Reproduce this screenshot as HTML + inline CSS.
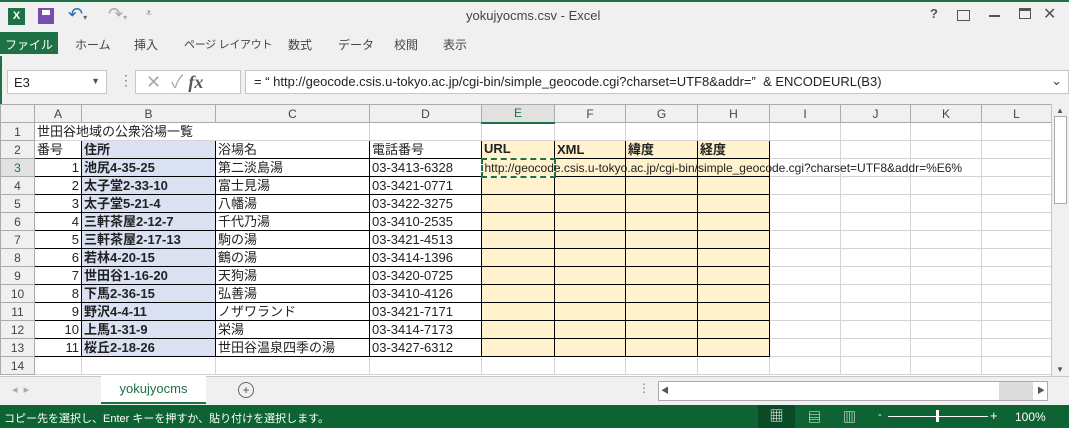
<!DOCTYPE html><html><head><meta charset="utf-8"><style>
*{margin:0;padding:0;box-sizing:border-box}
body{width:1069px;height:428px;overflow:hidden;background:#fff;font-family:"Liberation Sans","Noto Sans CJK JP",sans-serif;position:relative;font-size:12px;color:#222}
.a{position:absolute}
#title{left:0;top:0;width:1069px;height:32px;background:#f0f0f0;border-top:2px solid #1e7145}
#rib{left:0;top:32px;width:1069px;height:24px;background:#f0f0f0}
.tab{position:absolute;top:4px;font-size:12px;color:#444;white-space:nowrap}
#fbar{left:0;top:56px;width:1069px;height:48px;background:#f0f0f0;border-left:2px solid #1e7145}
table{position:absolute;left:0;top:104px;border-collapse:collapse;table-layout:fixed}
td{height:18px;border:1px solid #d4d4d4;padding:0 2px;font-size:13px;white-space:nowrap;overflow:visible;line-height:16px}
tr.h td{background:#f0f0f0;text-align:center;color:#444;font-size:12px;border-color:#ababab}
td.r{background:#f0f0f0;text-align:center;color:#444;font-size:12px;border-color:#ababab}
td.k{border:1px solid #000}
td.b{background:#dae1f3;font-weight:bold}
td.y{background:#fff2cc;font-weight:bold}
td.yy{background:#fff2cc;border:1px solid #000}
.n{text-align:right}
#sheet{left:0;top:376px;width:1069px;height:30px;background:#f0f0f0;border-top:1px solid #c6c6c6}
#status{left:0;top:405px;width:1069px;height:23px;background:#0e6333;color:#fff;font-size:11px}
</style></head><body>
<div id="title" class="a">
<div class="a" style="left:8px;top:6px;width:17px;height:17px;background:#1e7145;color:#fff;font-size:11px;font-weight:bold;text-align:center;line-height:17px">X</div>
<div class="a" style="left:38px;top:6px;width:16px;height:16px;background:#7a4bb0;border:2px solid #7a4bb0"><div style="background:#fff;width:8px;height:5px;margin:0 auto"></div></div>
<div class="a" style="left:68px;top:2px;color:#2e6fb4;font-size:18px">↶<span style="font-size:8px;color:#666">▾</span></div>
<div class="a" style="left:108px;top:2px;color:#aaa;font-size:18px">↷<span style="font-size:8px">▾</span></div>
<div class="a" style="left:146px;top:6px;color:#555;font-size:10px">⩡</div>
<div class="a" style="left:466px;top:6px;font-size:13px;color:#444">yokujyocms.csv - Excel</div>
<div class="a" style="left:930px;top:4px;font-size:13px;color:#555;font-weight:bold">?</div>
<div class="a" style="left:957px;top:8px;width:13px;height:11px;border:1px solid #555"></div>
<div class="a" style="left:989px;top:13px;width:11px;height:2px;background:#555"></div>
<div class="a" style="left:1019px;top:6px;width:12px;height:11px;border:1px solid #555;border-top-width:3px"></div>
<div class="a" style="left:1043px;top:2px;font-size:16px;color:#555">✕</div>
</div>
<div id="rib" class="a">
<div class="a" style="left:0;top:0;width:58px;height:22px;background:#1e7145;color:#fff;padding-top:4px;text-align:center;font-size:12px;white-space:nowrap">ファイル</div>
<div class="tab" style="left:75px">ホーム</div><div class="tab" style="left:134px">挿入</div><div class="tab" style="left:184px;font-size:11px;letter-spacing:-0.3px">ページ レイアウト</div><div class="tab" style="left:288px">数式</div><div class="tab" style="left:338px">データ</div><div class="tab" style="left:394px">校閲</div><div class="tab" style="left:443px">表示</div>
</div>
<div id="fbar" class="a">
<div class="a" style="left:5px;top:14px;width:100px;height:24px;background:#fff;border:1px solid #c6c6c6;padding:4px 6px;font-size:13px">E3<span style="position:absolute;right:6px;top:5px;font-size:9px;color:#555">▼</span></div>
<div class="a" style="left:117px;top:16px;color:#777;font-size:14px">⋮</div>
<div class="a" style="left:133px;top:14px;width:106px;height:24px;background:#fff;border:1px solid #c6c6c6;color:#aaa;font-size:18px;line-height:22px;padding-left:10px">✕ &nbsp;✓ <i style="color:#555;font-family:'Liberation Serif',serif;font-weight:bold">fx</i></div>
<div class="a" style="left:243px;top:14px;width:824px;height:24px;background:#fff;border:1px solid #c6c6c6;padding:3px 8px;font-size:13px;color:#222">= “ http://geocode.csis.u-tokyo.ac.jp/cgi-bin/simple_geocode.cgi?charset=UTF8&amp;addr=” &nbsp;&amp; ENCODEURL(B3)<span style="position:absolute;right:6px;top:2px;color:#444">⌄</span></div>
</div>
<table>
<colgroup><col style="width:34px"><col style="width:47px"><col style="width:134px"><col style="width:154px"><col style="width:112px"><col style="width:73px"><col style="width:71px"><col style="width:72px"><col style="width:72px"><col style="width:71px"><col style="width:70px"><col style="width:71px"><col style="width:70px"></colgroup>
<tr class="h"><td style="background:#f0f0f0"></td><td>A</td><td>B</td><td>C</td><td>D</td><td style="color:#1e7145;background:#e1e1e1;border-bottom:2px solid #1e7145">E</td><td>F</td><td>G</td><td>H</td><td>I</td><td>J</td><td>K</td><td>L</td></tr>
<tr><td class="r">1</td><td colspan="3" style="border-right-color:#d4d4d4">世田谷地域の公衆浴場一覧</td><td></td><td></td><td></td><td></td><td></td><td></td><td></td><td></td><td></td></tr>
<tr><td class="r">2</td><td class="k">番号</td><td class="k b">住所</td><td class="k">浴場名</td><td class="k">電話番号</td><td class="k y">URL</td><td class="k y">XML</td><td class="k y">緯度</td><td class="k y">経度</td><td></td><td></td><td></td><td></td></tr>
<tr><td class="r" style="background:#e1e1e1;color:#1e7145">3</td><td class="k n">1</td><td class="k b">池尻4-35-25</td><td class="k">第二淡島湯</td><td class="k">03-3413-6328</td><td class="k" style="background:#fff2cc;border:2px dashed #1e7145;overflow:visible;position:relative"><span style="position:absolute;left:2px;top:0;font-size:12px">http://geocode.csis.u-tokyo.ac.jp/cgi-bin/simple_geocode.cgi?charset=UTF8&amp;addr=%E6%</span></td><td class="yy"></td><td class="yy"></td><td class="yy"></td><td></td><td></td><td></td><td></td></tr>
<tr><td class="r">4</td><td class="k n">2</td><td class="k b">太子堂2-33-10</td><td class="k">富士見湯</td><td class="k">03-3421-0771</td><td class="yy"></td><td class="yy"></td><td class="yy"></td><td class="yy"></td><td></td><td></td><td></td><td></td></tr>
<tr><td class="r">5</td><td class="k n">3</td><td class="k b">太子堂5-21-4</td><td class="k">八幡湯</td><td class="k">03-3422-3275</td><td class="yy"></td><td class="yy"></td><td class="yy"></td><td class="yy"></td><td></td><td></td><td></td><td></td></tr>
<tr><td class="r">6</td><td class="k n">4</td><td class="k b">三軒茶屋2-12-7</td><td class="k">千代乃湯</td><td class="k">03-3410-2535</td><td class="yy"></td><td class="yy"></td><td class="yy"></td><td class="yy"></td><td></td><td></td><td></td><td></td></tr>
<tr><td class="r">7</td><td class="k n">5</td><td class="k b">三軒茶屋2-17-13</td><td class="k">駒の湯</td><td class="k">03-3421-4513</td><td class="yy"></td><td class="yy"></td><td class="yy"></td><td class="yy"></td><td></td><td></td><td></td><td></td></tr>
<tr><td class="r">8</td><td class="k n">6</td><td class="k b">若林4-20-15</td><td class="k">鶴の湯</td><td class="k">03-3414-1396</td><td class="yy"></td><td class="yy"></td><td class="yy"></td><td class="yy"></td><td></td><td></td><td></td><td></td></tr>
<tr><td class="r">9</td><td class="k n">7</td><td class="k b">世田谷1-16-20</td><td class="k">天狗湯</td><td class="k">03-3420-0725</td><td class="yy"></td><td class="yy"></td><td class="yy"></td><td class="yy"></td><td></td><td></td><td></td><td></td></tr>
<tr><td class="r">10</td><td class="k n">8</td><td class="k b">下馬2-36-15</td><td class="k">弘善湯</td><td class="k">03-3410-4126</td><td class="yy"></td><td class="yy"></td><td class="yy"></td><td class="yy"></td><td></td><td></td><td></td><td></td></tr>
<tr><td class="r">11</td><td class="k n">9</td><td class="k b">野沢4-4-11</td><td class="k">ノザワランド</td><td class="k">03-3421-7171</td><td class="yy"></td><td class="yy"></td><td class="yy"></td><td class="yy"></td><td></td><td></td><td></td><td></td></tr>
<tr><td class="r">12</td><td class="k n">10</td><td class="k b">上馬1-31-9</td><td class="k">栄湯</td><td class="k">03-3414-7173</td><td class="yy"></td><td class="yy"></td><td class="yy"></td><td class="yy"></td><td></td><td></td><td></td><td></td></tr>
<tr><td class="r">13</td><td class="k n">11</td><td class="k b">桜丘2-18-26</td><td class="k">世田谷温泉四季の湯</td><td class="k">03-3427-6312</td><td class="yy"></td><td class="yy"></td><td class="yy"></td><td class="yy"></td><td></td><td></td><td></td><td></td></tr>
<tr><td class="r">14</td><td></td><td></td><td></td><td></td><td></td><td></td><td></td><td></td><td></td><td></td><td></td><td></td></tr>
</table>
<div class="a" style="left:1051px;top:104px;width:18px;height:272px;background:#f0f0f0;border-left:1px solid #c6c6c6">
<div style="margin:12px 2px 0;height:88px;background:#fff;border:1px solid #ababab"></div>
<div class="a" style="left:4px;top:2px;font-size:8px;color:#555">▲</div><div class="a" style="left:4px;bottom:2px;font-size:8px;color:#555">▼</div></div>
<div id="sheet" class="a">
<div class="a" style="left:12px;top:6px;color:#aaa;font-size:11px">◂ &nbsp;▸</div>
<div class="a" style="left:101px;top:-1px;width:105px;height:28px;background:#fff;border-bottom:2px solid #1e7145;color:#1e7145;font-size:13px;text-align:center;line-height:26px">yokujyocms</div>
<div class="a" style="left:238px;top:5px;width:16px;height:16px;border:1px solid #666;border-radius:50%;text-align:center;line-height:14px;color:#555">+</div>
<div class="a" style="left:638px;top:4px;color:#777">⋮</div>
<div class="a" style="left:658px;top:4px;width:390px;height:20px;background:#fff;border:1px solid #ababab">
<div style="position:absolute;left:2px;top:3px;font-size:8px;color:#555">◀</div>
<div style="position:absolute;left:340px;top:0;width:34px;height:18px;background:#dcdcdc"></div>
<div style="position:absolute;right:2px;top:3px;font-size:8px;color:#555">▶</div></div>
</div>
<div id="status" class="a">
<div class="a" style="left:4px;top:5px">コピー先を選択し、Enter キーを押すか、貼り付けを選択します。</div>
<div class="a" style="left:758px;top:0;width:37px;height:23px;background:#0a4a26;text-align:center;font-size:14px;line-height:22px">▦</div>
<div class="a" style="left:808px;top:2px;font-size:13px">▤</div>
<div class="a" style="left:843px;top:2px;font-size:13px">▥</div>
<div class="a" style="left:878px;top:4px">-</div>
<div class="a" style="left:888px;top:11px;width:100px;height:1px;background:#fff"></div>
<div class="a" style="left:936px;top:5px;width:3px;height:12px;background:#fff"></div>
<div class="a" style="left:990px;top:3px;font-size:13px">+</div>
<div class="a" style="left:1015px;top:5px;font-size:12px">100%</div>
</div>
</body></html>
